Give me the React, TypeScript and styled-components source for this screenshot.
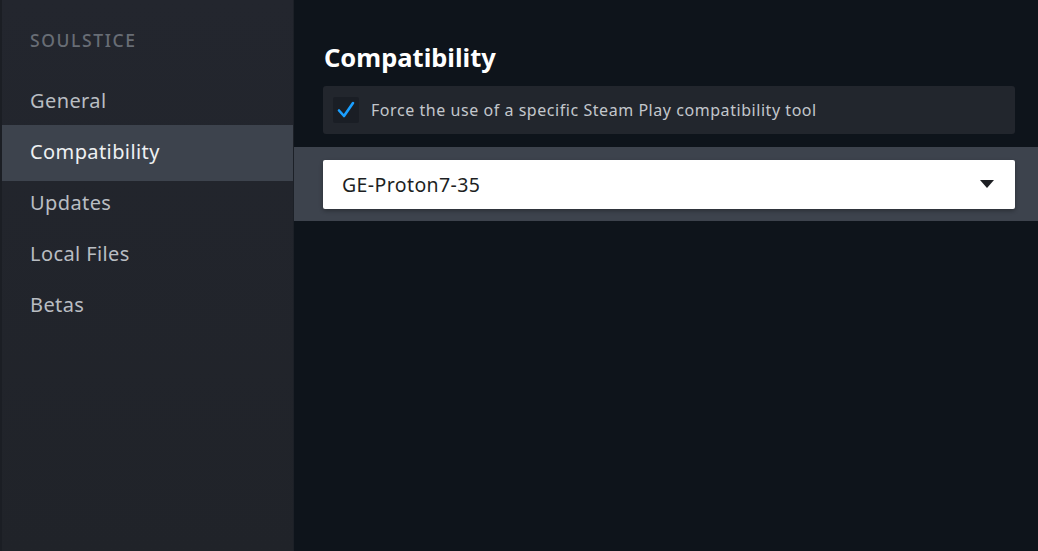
import React, { useState } from "react";
import styled, { createGlobalStyle } from "styled-components";

const GlobalStyle = createGlobalStyle`
  html, body {
    margin: 0;
    padding: 0;
    background: #0e141b;
  }
  body {
    font-family: "Noto Sans", "Open Sans", sans-serif;
  }
`;

const Page = styled.div`
  display: flex;
  width: 1038px;
  height: 551px;
  overflow: hidden;
  background: #0e141b;
`;

const Sidebar = styled.nav`
  width: 293px;
  flex-shrink: 0;
  display: flex;
  flex-direction: column;
  background: linear-gradient(180deg, #23262e 0%, #202329 100%);
  border-left: 2px solid #1b1e24;
  box-sizing: border-box;
  padding-top: 28px;
`;

const GameTitle = styled.div`
  padding-left: 28px;
  font-size: 17.5px;
  font-weight: 500;
  letter-spacing: 1.6px;
  color: #686d75;
  text-transform: uppercase;
  margin-bottom: 27px;
`;

const NavItem = styled.div<{ $active?: boolean }>`
  height: 56px;
  box-sizing: border-box;
  padding-bottom: 4px;
  margin-top: -5px;
  display: flex;
  align-items: center;
  padding-left: 28px;
  font-size: 20px;
  letter-spacing: 0.4px;
  color: ${(p) => (p.$active ? "#eef0f2" : "#b9bdc2")};
  background: ${(p) => (p.$active ? "#3d434d" : "transparent")};
  cursor: pointer;
`;

const Content = styled.main`
  flex: 1;
  display: flex;
  flex-direction: column;
  padding-top: 40px;
  border-left: 1px solid #1c2027;
`;

const Title = styled.h1`
  margin: 0 0 12px 0;
  padding-left: 30px;
  font-size: 25.5px;
  font-weight: 700;
  color: #ffffff;
  line-height: 34px;
`;

const CheckRow = styled.label`
  margin: 0 23px 0 29px;
  height: 48px;
  display: flex;
  align-items: center;
  gap: 12px;
  padding-left: 10px;
  background: #22262d;
  border-radius: 3px;
  cursor: pointer;
`;

const CheckBox = styled.span`
  width: 26px;
  height: 26px;
  background: #1a1e25;
  border-radius: 2px;
  display: flex;
  align-items: center;
  justify-content: center;
`;

const CheckLabel = styled.span`
  font-size: 16px;
  color: #c3c7cc;
  letter-spacing: 0.55px;
`;

const SelectBand = styled.div`
  margin-top: 13px;
  height: 74px;
  background: #3d434d;
  display: flex;
  align-items: center;
  padding: 0 23px 0 29px;
`;

const Select = styled.div`
  flex: 1;
  height: 49px;
  background: #ffffff;
  border-radius: 2px;
  display: flex;
  align-items: center;
  justify-content: space-between;
  padding: 0 20px 0 19px;
  box-shadow: 0 2px 4px rgba(0, 0, 0, 0.3);
  font-size: 19.5px;
  letter-spacing: 0.4px;
  color: #1d1f23;
  cursor: pointer;
`;

const items = ["General", "Compatibility", "Updates", "Local Files", "Betas"];

export default function App() {
  const [active, setActive] = useState("Compatibility");
  const [checked, setChecked] = useState(true);

  return (
    <Page>
      <GlobalStyle />
      <Sidebar>
        <GameTitle>Soulstice</GameTitle>
        {items.map((item) => (
          <NavItem key={item} $active={item === active} onClick={() => setActive(item)}>
            {item}
          </NavItem>
        ))}
      </Sidebar>
      <Content>
        <Title>Compatibility</Title>
        <CheckRow onClick={() => setChecked(!checked)}>
          <CheckBox>
            {checked && (
              <svg width="20" height="20" viewBox="0 0 20 20">
                <path d="M3 10.5 L8 16 L17 3" fill="none" stroke="#1a9fff" strokeWidth="2.6" strokeLinecap="round" strokeLinejoin="round" />
              </svg>
            )}
          </CheckBox>
          <CheckLabel>Force the use of a specific Steam Play compatibility tool</CheckLabel>
        </CheckRow>
        <SelectBand>
          <Select>
            <span>GE-Proton7-35</span>
            <svg width="16" height="10" viewBox="0 0 16 10">
              <path d="M1 1 H15 L8 9 Z" fill="#1d1f23" />
            </svg>
          </Select>
        </SelectBand>
      </Content>
    </Page>
  );
}
